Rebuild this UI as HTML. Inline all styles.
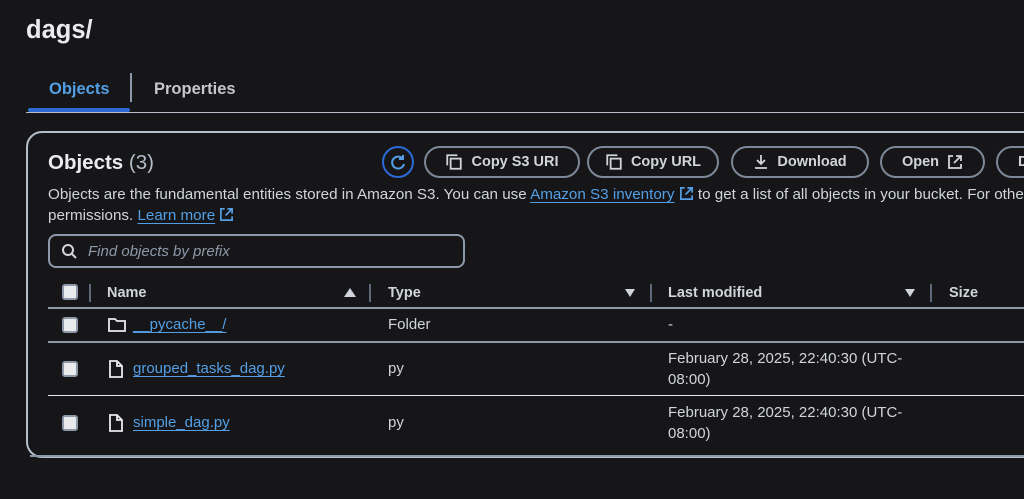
<!DOCTYPE html>
<html><head><meta charset="utf-8"><style>
*{box-sizing:border-box;margin:0;padding:0}
body{width:1024px;height:499px;overflow:hidden;background:#161618;font-family:"Liberation Sans",sans-serif;color:#d1d5db;position:relative}
.a{position:absolute;white-space:nowrap}
.btn{position:absolute;top:146px;height:32px;border:2px solid #7d8998;border-radius:16px;color:#d1d5db;font-weight:bold;font-size:14.5px;display:flex;align-items:center;justify-content:center;gap:8px}
.lnk{color:#539fe5;text-decoration:underline;text-underline-offset:3px}
.cb{position:absolute;left:62px;width:16px;height:16px;border:2px solid #8d99a8;border-radius:3px;background:#e9ebed}
.hl{position:absolute;left:48px;right:0;height:2px;background:#8d99a8}
.vd{position:absolute;width:2px;height:18px;background:#5f6b7a;top:284px}
.tri{position:absolute;top:288px;width:0;height:0}
.t{font-size:15px}
</style></head><body>
<div class="a" style="left:26px;top:16px;font-size:25.5px;font-weight:bold;color:#e9ebed">dags/</div>
<div class="a" style="left:49px;top:80px;font-size:16.5px;font-weight:bold;color:#539fe5">Objects</div>
<div class="a" style="left:28px;top:108px;width:102px;height:4px;background:#2c6ad6;border-radius:2px"></div>
<div class="a" style="left:130px;top:73px;width:2px;height:29px;background:#8d99a8"></div>
<div class="a" style="left:154px;top:80px;font-size:16.5px;font-weight:bold;color:#c6c6cd">Properties</div>
<div class="a" style="left:26px;top:112px;right:0;height:1px;background:#b6bec9"></div>

<div class="a" style="left:26px;top:131px;width:1030px;height:327px;border:2px solid #b6bec9;border-radius:16px;background:#161618"></div>
<div class="a" style="left:48px;top:151px;font-size:20.5px;font-weight:bold;color:#e9ebed">Objects <span style="font-weight:normal;color:#b6bec9">(3)</span></div>

<div class="a" style="left:382px;top:146px;width:32px;height:32px;border:2px solid #2c6ad6;border-radius:50%;display:flex;align-items:center;justify-content:center">
<svg width="18" height="18" viewBox="0 0 18 18" fill="none" stroke="#539fe5" stroke-width="2"><path d="M14 6A6 6 0 1 0 15 11"/><path d="M14 2v4h-4"/></svg></div>

<div class="btn" style="left:424px;width:156px"><svg width="18" height="18" viewBox="0 0 16 16" fill="none" stroke="#d1d5db" stroke-width="1.6"><path d="M2 11V2h9"/><rect x="5" y="5" width="9" height="9"/></svg>Copy S3 URI</div>
<div class="btn" style="left:587px;width:132px"><svg width="18" height="18" viewBox="0 0 16 16" fill="none" stroke="#d1d5db" stroke-width="1.6"><path d="M2 11V2h9"/><rect x="5" y="5" width="9" height="9"/></svg>Copy URL</div>
<div class="btn" style="left:731px;width:138px"><svg width="16" height="16" viewBox="0 0 16 16" fill="none" stroke="#d1d5db" stroke-width="1.8"><path d="M8 1v9M4 6l4 4 4-4M2 14h12"/></svg>Download</div>
<div class="btn" style="left:880px;width:105px">Open <svg width="16" height="16" viewBox="0 0 16 16" fill="none" stroke="#d1d5db" stroke-width="1.8"><path d="M6 2H2v12h12v-4M9 2h5v5M14 2L7 9"/></svg></div>
<div class="btn" style="left:996px;width:80px;justify-content:flex-start;padding-left:20px">D</div>

<div class="a" style="left:48px;top:184px;font-size:15.2px;line-height:21px;color:#d1d5db">Objects are the fundamental entities stored in Amazon S3. You can use <span class="lnk">Amazon S3 inventory</span> <svg width="15" height="15" viewBox="0 0 16 16" fill="none" stroke="#539fe5" stroke-width="1.8" style="vertical-align:-2px"><path d="M6 2H2v12h12v-4M9 2h5v5M14 2L7 9"/></svg> to get a list of all objects in your bucket. For other<br>permissions. <span class="lnk">Learn more</span> <svg width="15" height="15" viewBox="0 0 16 16" fill="none" stroke="#539fe5" stroke-width="1.8" style="vertical-align:-2px"><path d="M6 2H2v12h12v-4M9 2h5v5M14 2L7 9"/></svg></div>

<div class="a" style="left:48px;top:234px;width:417px;height:34px;border:2px solid #8d99a8;border-radius:8px"></div>
<svg class="a" style="left:61px;top:243px" width="16" height="16" viewBox="0 0 16 16" fill="none" stroke="#d1d5db" stroke-width="2"><circle cx="7" cy="7" r="5"/><path d="M11 11l4 4"/></svg>
<div class="a" style="left:88px;top:243px;font-size:15px;font-style:italic;color:#8d99a8">Find objects by prefix</div>

<div class="cb" style="top:284px"></div>
<div class="vd" style="left:89px"></div>
<div class="a" style="left:107px;top:285px;font-size:14.5px;font-weight:bold;color:#d1d5db">Name</div>
<div class="tri" style="left:344px;border-left:6px solid transparent;border-right:6px solid transparent;border-bottom:9px solid #d1d5db"></div>
<div class="vd" style="left:369px"></div>
<div class="a" style="left:388px;top:285px;font-size:14.5px;font-weight:bold;color:#d1d5db">Type</div>
<div class="tri" style="left:625px;top:289px;border-left:5px solid transparent;border-right:5px solid transparent;border-top:8px solid #d1d5db"></div>
<div class="vd" style="left:650px"></div>
<div class="a" style="left:668px;top:285px;font-size:14.5px;font-weight:bold;color:#d1d5db">Last modified</div>
<div class="tri" style="left:905px;top:289px;border-left:5px solid transparent;border-right:5px solid transparent;border-top:8px solid #d1d5db"></div>
<div class="vd" style="left:930px"></div>
<div class="a" style="left:949px;top:285px;font-size:14.5px;font-weight:bold;color:#d1d5db">Size</div>
<div class="hl" style="top:307px"></div>

<div class="cb" style="top:317px"></div>
<svg class="a" style="left:108px;top:317px" width="18" height="16" viewBox="0 0 18 16" fill="none" stroke="#e9ebed" stroke-width="1.8"><path d="M1 2h6l2 2h8v10H1z"/></svg>
<div class="a lnk t" style="left:133px;top:316px">__pycache__/</div>
<div class="a t" style="left:388px;top:316px">Folder</div>
<div class="a t" style="left:668px;top:316px">-</div>
<div class="hl" style="top:341px"></div>

<div class="cb" style="top:361px"></div>
<svg class="a" style="left:109px;top:360px" width="14" height="18" viewBox="0 0 14 18" fill="none" stroke="#e9ebed" stroke-width="1.8"><path d="M1 1h7l5 5v11H1zM8 1v5h5"/></svg>
<div class="a lnk t" style="left:133px;top:360px">grouped_tasks_dag.py</div>
<div class="a t" style="left:388px;top:360px">py</div>
<div class="a t" style="left:668px;top:348px;line-height:21px">February 28, 2025, 22:40:30 (UTC-<br>08:00)</div>
<div class="hl" style="top:395px;background:#e9ebed;height:1px"></div>

<div class="cb" style="top:415px"></div>
<svg class="a" style="left:109px;top:414px" width="14" height="18" viewBox="0 0 14 18" fill="none" stroke="#e9ebed" stroke-width="1.8"><path d="M1 1h7l5 5v11H1zM8 1v5h5"/></svg>
<div class="a lnk t" style="left:133px;top:414px">simple_dag.py</div>
<div class="a t" style="left:388px;top:414px">py</div>
<div class="a t" style="left:668px;top:402px;line-height:21px">February 28, 2025, 22:40:30 (UTC-<br>08:00)</div>
<div class="hl" style="top:455px;left:30px"></div>
</body></html>
